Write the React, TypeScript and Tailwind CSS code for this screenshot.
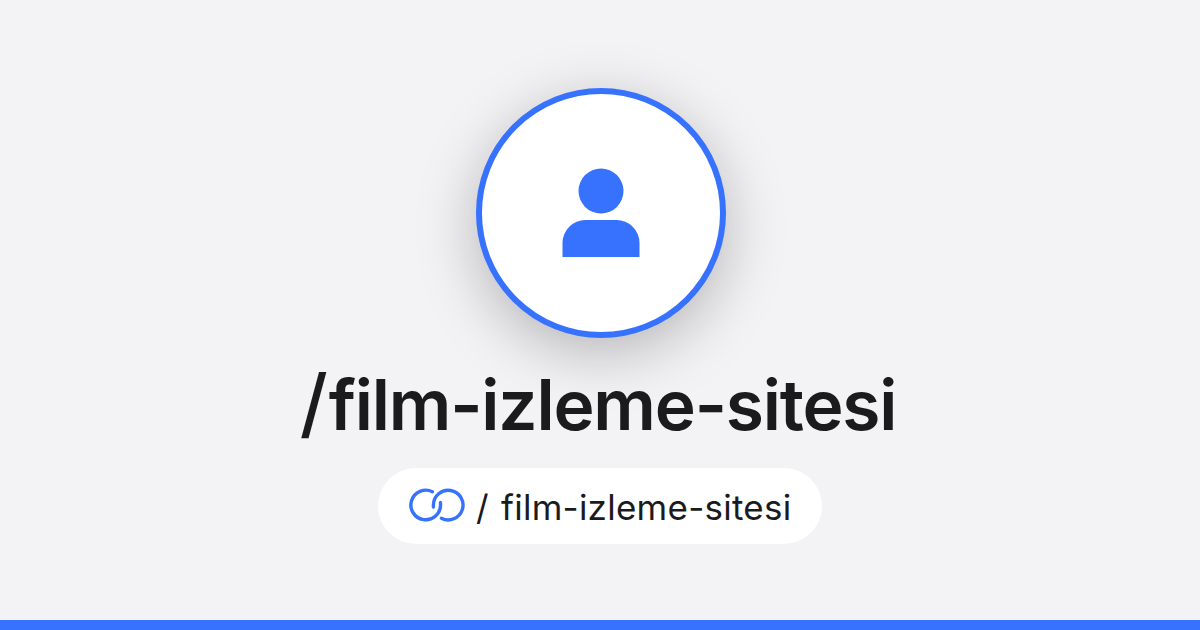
const slug = "film-izleme-sitesi";

const LinkRings = () => (
  <svg width="56" height="34" viewBox="0 0 56 34" fill="none" stroke="#3772FF" strokeWidth="3.4" strokeLinecap="round" className="-mt-0.5 shrink-0">
    <path d="M23.4 3.8A14.800 14.800 0 1 0 31.500 17V14.500" />
    <path d="M32.4 30.2A14.800 14.800 0 1 0 24.400 17V19" />
  </svg>
);

const Avatar = () => (
  <div className="ml-0.5 flex size-[250px] items-center justify-center rounded-full border-[6px] border-[#3772FF] bg-white shadow-[0_15px_60px_rgba(0,0,0,0.25)]">
    <svg width="78" height="90" viewBox="0 0 78 90" fill="#3772FF">
      <circle cx="39" cy="23" r="22.5" />
      <path d="M0.5 89V75A23 23 0 0 1 23.5 52H54.500A23 23 0 0 1 77.500 75V89Z" />
    </svg>
  </div>
);

export default function App() {
  return (
    <main className="flex h-[630px] w-[1200px] flex-col items-center overflow-hidden border-b-[10px] border-[#3772FF] bg-[#F3F3F6] pt-[88px] font-['Inter',sans-serif] text-[#1B1B1D]">
      <Avatar />
      <h1 className="mt-6 flex h-[82px] items-baseline pr-1 text-[69.5px] leading-[80px] font-semibold tracking-[-1.2px] whitespace-nowrap">
        <span className="mr-0.5 text-[76px] font-medium">/</span>
        <span>{slug}</span>
      </h1>
      <div className="mt-6 flex h-[76px] w-[444px] items-center rounded-full bg-white pl-[31px]">
        <LinkRings />
        <span className="mt-0.5 ml-[11px] text-[35px] tracking-[0.25px] whitespace-nowrap">
          <span className="mr-0.5">/</span> {slug}
        </span>
      </div>
    </main>
  );
}
